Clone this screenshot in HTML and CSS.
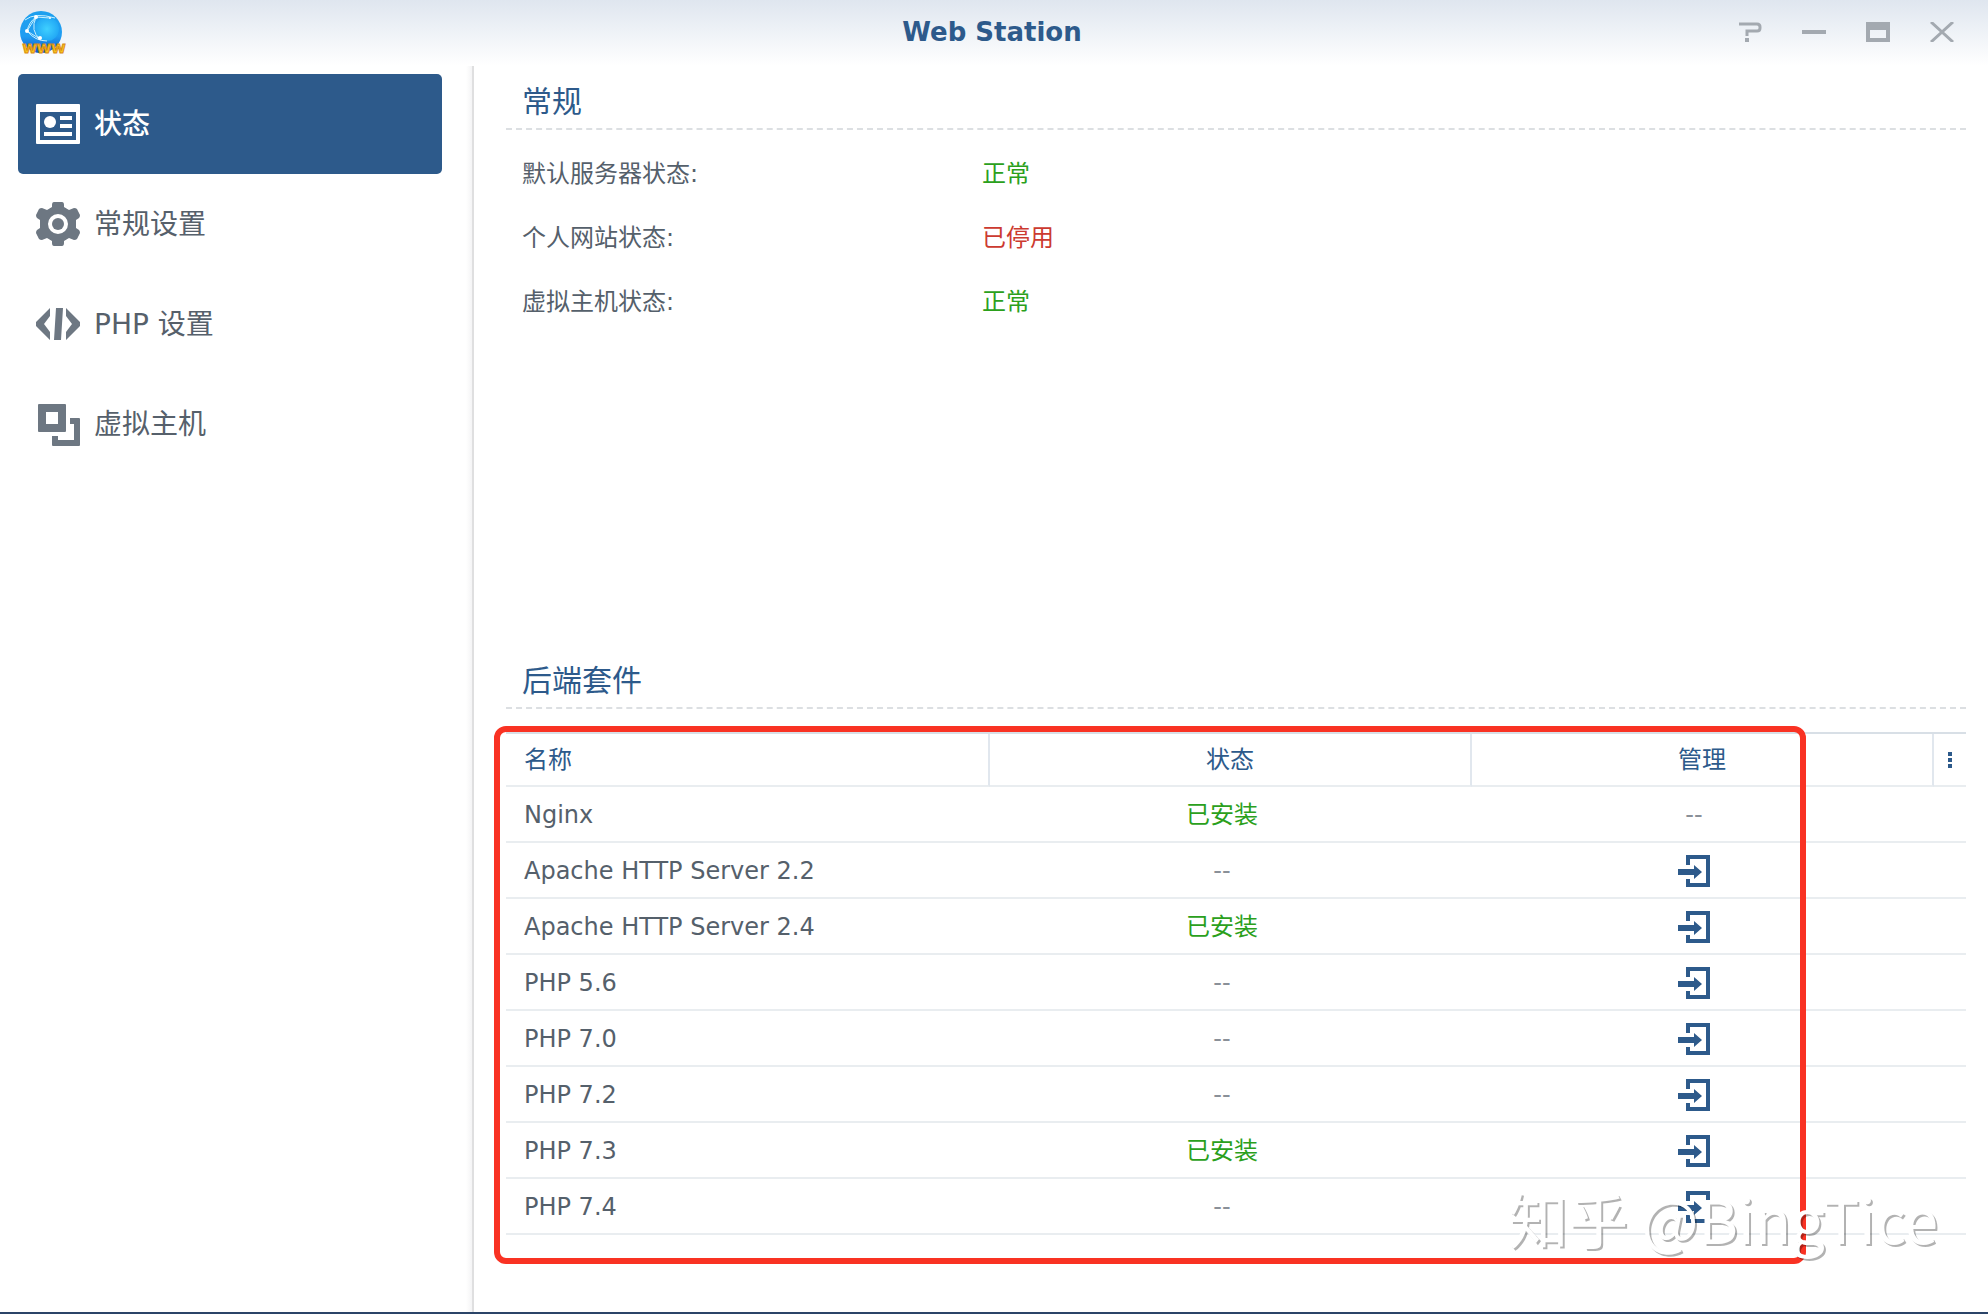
FILE: index.html
```html
<!DOCTYPE html>
<html lang="zh-CN">
<head>
    <meta charset="UTF-8">
    <meta name="viewport" content="width=device-width, initial-scale=1.0">
    <title>Web Station</title>
    <link rel="stylesheet" href="styles.css">
</head>
<body>
    <svg class="defs" aria-hidden="true">
        <symbol id="icon-open" viewBox="0 0 32 32">
            <path fill="currentColor" d="M8 0h24v32H8v-8h4v4h16V4H12v6H8z"/>
            <path fill="currentColor" d="M0 14h16v-4l8 7-8 7v-4H0z"/>
        </symbol>
    </svg>

    <div class="window">
        <header class="titlebar">
            <svg class="app-icon" viewBox="0 0 48 48" aria-hidden="true">
                <defs>
                    <linearGradient id="globe" x1="0" y1="0" x2="0" y2="1">
                        <stop offset="0" stop-color="#1ea0ee"/>
                        <stop offset="0.6" stop-color="#1f9df2"/>
                        <stop offset="1" stop-color="#1257c8"/>
                    </linearGradient>
                    <radialGradient id="glow">
                        <stop offset="0" stop-color="#3fd0ff"/>
                        <stop offset="1" stop-color="#22a8f5"/>
                    </radialGradient>
                </defs>
                <circle cx="23" cy="24" r="21" fill="url(#globe)"/>
                <circle cx="29" cy="21" r="12" fill="url(#glow)"/>
                <g fill="none" stroke="#c8f1ff" stroke-width="1">
                    <path d="M7 12q10-8 30-2M18 9Q11 14 9 23q8 10 20 10M18 9q-6 14 4 22M9 23l9-14 14 1M9 23l13 8"/>
                </g>
                <g fill="#fff">
                    <circle cx="18" cy="9" r="2"/>
                    <circle cx="9" cy="23" r="2"/>
                    <circle cx="22" cy="30" r="2"/>
                    <circle cx="32" cy="10" r="1"/>
                </g>
                <text class="app-icon-text" x="26" y="45" text-anchor="middle">WWW</text>
            </svg>
            <h1 class="title">Web Station</h1>
            <div class="controls">
                <button type="button" class="control" aria-label="帮助">
                    <svg viewBox="0 0 24 20"><path d="M1 2h18q3 0 3 3v1q0 3-3 3H9v5" fill="none" stroke="currentColor" stroke-width="3"/><path d="M7 16h4v4H7z" fill="currentColor"/></svg>
                </button>
                <button type="button" class="control" aria-label="最小化">
                    <svg viewBox="0 0 24 20"><path d="M0 8h24v4H0z" fill="currentColor"/></svg>
                </button>
                <button type="button" class="control" aria-label="最大化">
                    <svg viewBox="0 0 24 20"><path d="M0 0h24v20H0zM4 8v8h16V8z" fill="currentColor" fill-rule="evenodd"/></svg>
                </button>
                <button type="button" class="control" aria-label="关闭">
                    <svg viewBox="0 0 24 20"><path d="M1 0l22 20M23 0L1 20" fill="none" stroke="currentColor" stroke-width="3"/></svg>
                </button>
            </div>
        </header>

        <div class="body">
            <nav class="sidebar">
                <a href="#" class="nav-item active">
                    <svg class="nav-icon" viewBox="0 0 44 44" aria-hidden="true">
                        <path fill="currentColor" fill-rule="evenodd" d="M1 2h42q1 0 1 1v38q0 1-1 1H1q-1 0-1-1V3q0-1 1-1zM4 10v28h36V10z"/>
                        <circle cx="14" cy="20" r="6" fill="currentColor"/>
                        <path fill="currentColor" d="M24 14h12v4H24zM24 22h12v4H24zM8 30h28v4H8z"/>
                    </svg>
                    <span>状态</span>
                </a>
                <a href="#" class="nav-item">
                    <svg class="nav-icon" viewBox="0 0 44 44" aria-hidden="true">
                        <path fill="currentColor" fill-rule="evenodd" d="M18 0h8q2 0 2 3v2l5 3 5-2q2 0 3 1l3 6q0 2-1 3l-3 2v8l3 2q1 1 1 3l-3 6q-1 1-3 1l-5-2-5 3v2q0 3-2 3h-8q-2 0-2-3v-2l-5-3-5 2q-2 0-3-1l-3-6q0-2 1-3l3-2v-8l-3-2q-1-1-1-3l3-6q1-1 3-1l5 2 5-3V3q0-3 2-3zM22 12a10 10 0 1 0 0 20a10 10 0 1 0 0-20z"/>
                        <circle cx="22" cy="22" r="6" fill="currentColor"/>
                    </svg>
                    <span>常规设置</span>
                </a>
                <a href="#" class="nav-item">
                    <svg class="nav-icon" viewBox="0 0 44 44" aria-hidden="true">
                        <path fill="currentColor" d="M14 6v8L8 22l6 8v8L0 24v-4zM30 6l14 14v4L30 38v-8l6-8-6-8zM20 6h7l-2 32h-7z"/>
                    </svg>
                    <span>PHP 设置</span>
                </a>
                <a href="#" class="nav-item">
                    <svg class="nav-icon" viewBox="0 0 44 44" aria-hidden="true">
                        <path fill="currentColor" fill-rule="evenodd" d="M3 2h26q1 0 1 1v26q0 1-1 1H3q-1 0-1-1V3q0-1 1-1zM10 10v12h12V10z"/>
                        <path fill="currentColor" d="M34 16h9q1 0 1 1v26q0 1-1 1H17q-1 0-1-1v-9h6v4h16V22h-4z"/>
                    </svg>
                    <span>虚拟主机</span>
                </a>
            </nav>

            <main class="content">
                <section class="general">
                    <h2 class="section-title">常规</h2>
                    <dl class="status-list">
                        <dt>默认服务器状态:</dt>
                        <dd class="ok">正常</dd>
                        <dt>个人网站状态:</dt>
                        <dd class="off">已停用</dd>
                        <dt>虚拟主机状态:</dt>
                        <dd class="ok">正常</dd>
                    </dl>
                </section>

                <section class="packages">
                    <h2 class="section-title">后端套件</h2>
                    <div class="table-wrap">
                        <table class="table">
                            <colgroup>
                                <col class="col-name">
                                <col class="col-status">
                                <col class="col-manage">
                                <col class="col-menu">
                            </colgroup>
                            <thead>
                                <tr>
                                    <th>名称</th>
                                    <th>状态</th>
                                    <th>管理</th>
                                    <th>
                                        <button type="button" class="menu" aria-label="列选项">
                                            <svg viewBox="0 0 4 16"><path fill="currentColor" d="M0 0h4v4H0zM0 6h4v4H0zM0 12h4v4H0z"/></svg>
                                        </button>
                                    </th>
                                </tr>
                            </thead>
                            <tbody>
                                <tr>
                                    <td>Nginx</td>
                                    <td class="ok">已安装</td>
                                    <td>--</td>
                                    <td></td>
                                </tr>
                                <tr>
                                    <td>Apache HTTP Server 2.2</td>
                                    <td>--</td>
                                    <td><button type="button" class="open" aria-label="打开"><svg><use href="#icon-open"/></svg></button></td>
                                    <td></td>
                                </tr>
                                <tr>
                                    <td>Apache HTTP Server 2.4</td>
                                    <td class="ok">已安装</td>
                                    <td><button type="button" class="open" aria-label="打开"><svg><use href="#icon-open"/></svg></button></td>
                                    <td></td>
                                </tr>
                                <tr>
                                    <td>PHP 5.6</td>
                                    <td>--</td>
                                    <td><button type="button" class="open" aria-label="打开"><svg><use href="#icon-open"/></svg></button></td>
                                    <td></td>
                                </tr>
                                <tr>
                                    <td>PHP 7.0</td>
                                    <td>--</td>
                                    <td><button type="button" class="open" aria-label="打开"><svg><use href="#icon-open"/></svg></button></td>
                                    <td></td>
                                </tr>
                                <tr>
                                    <td>PHP 7.2</td>
                                    <td>--</td>
                                    <td><button type="button" class="open" aria-label="打开"><svg><use href="#icon-open"/></svg></button></td>
                                    <td></td>
                                </tr>
                                <tr>
                                    <td>PHP 7.3</td>
                                    <td class="ok">已安装</td>
                                    <td><button type="button" class="open" aria-label="打开"><svg><use href="#icon-open"/></svg></button></td>
                                    <td></td>
                                </tr>
                                <tr>
                                    <td>PHP 7.4</td>
                                    <td>--</td>
                                    <td><button type="button" class="open" aria-label="打开"><svg><use href="#icon-open"/></svg></button></td>
                                    <td></td>
                                </tr>
                            </tbody>
                        </table>
                        <div class="highlight"></div>
                    </div>
                </section>
            </main>
        </div>
        <div class="watermark">知乎 @BingTice</div>
    </div>
</body>
</html>
```

FILE: styles.css
```css
* {
    box-sizing: border-box;
}
body {
    margin: 0;
    font-family: Verdana, "DejaVu Sans", "Noto Sans CJK SC", sans-serif;
    font-size: 24px;
    line-height: 32px;
    color: #55606b;
    background: #fff;
}
button {
    display: block;
    padding: 0;
    border: 0;
    background: none;
    cursor: pointer;
}
svg {
    display: block;
}
.defs {
    display: none;
}
.window {
    position: relative;
    min-height: 100vh;
    display: flex;
    flex-direction: column;
    border-bottom: 2px solid #2b4468;
}

/* 标题栏 */
.titlebar {
    display: grid;
    grid-template-columns: 1fr auto 1fr;
    align-items: center;
    height: 66px;
    padding: 0 22px 2px 18px;
    background: linear-gradient(#dfe6ef, #fff);
}
.app-icon {
    width: 48px;
    height: 48px;
}
.app-icon-text {
    font: bold 13px "DejaVu Sans", sans-serif;
    fill: #f9c61c;
    stroke: #d98a12;
    stroke-width: 1px;
}
.title {
    margin: 0;
    font-size: 26px;
    font-weight: bold;
    color: #2d5a8b;
}
.controls {
    display: flex;
    justify-content: flex-end;
    gap: 40px;
    padding-right: 12px;
}
.control {
    color: #a3a9b0;
}
.control svg {
    width: 24px;
    height: 20px;
}

.body {
    flex: 1;
    display: flex;
}

/* 侧边栏 */
.sidebar {
    width: 474px;
    padding: 8px 30px 0 18px;
    border-right: 2px solid #dfdfe0;
    background: linear-gradient(to left, #f4f4f5, #fff 6px);
}
.nav-item {
    display: flex;
    align-items: center;
    gap: 14px;
    height: 100px;
    padding-left: 18px;
    border-radius: 5px;
    font-size: 28px;
    color: #56606b;
    text-decoration: none;
}
.nav-icon {
    width: 44px;
    height: 44px;
    color: #6d7782;
}
.nav-item span {
    padding-top: 2px;
}
.active,
.active .nav-icon {
    color: #fff;
}
.active {
    background: #2d5a8b;
    font-weight: 500;
}

/* 内容区 */
.content {
    flex: 1;
    padding: 15px 22px 32px 32px;
}
.general {
    height: 579px;
}
.section-title {
    margin: 0;
    padding: 0 16px 5px;
    border-bottom: 2px dashed #dcdfe2;
    font-size: 30px;
    font-weight: normal;
    line-height: 42px;
    color: #2d5a8b;
}
.status-list {
    display: grid;
    grid-template-columns: 460px 1fr;
    margin: 0;
    padding: 12px 16px;
    line-height: 64px;
}
.status-list dd {
    margin: 0;
}
.ok {
    color: #2ba01c;
}
.off {
    color: #cc3a30;
}

/* 套件列表 */
.table-wrap {
    position: relative;
    margin-top: 23px;
}
.table {
    width: 100%;
    table-layout: fixed;
    border-collapse: separate;
    border-spacing: 0;
    border-top: 2px solid #d8dfe6;
}
.col-name {
    width: 484px;
}
.col-status {
    width: 482px;
}
.col-menu {
    width: 32px;
}
.table th,
.table td {
    height: 56px;
    padding: 0;
    border-bottom: 2px solid #e9edf0;
    text-align: center;
}
.table th {
    height: 53px;
    border-right: 2px solid #e1e7ee;
    font-weight: normal;
    color: #2d5a8b;
}
.table th:last-child {
    border-right: 0;
}
.table td {
    padding-top: 2px;
    padding-right: 18px;
}
.table th:first-child,
.table td:first-child {
    padding-left: 18px;
    text-align: left;
}
.table td:not(:first-child, .ok) {
    color: #8a9098;
}
.open,
.menu {
    margin: 0 auto;
}
.table .open {
    color: #2d5a8b;
}
.open svg {
    width: 32px;
    height: 32px;
}
.menu {
    color: #2d5a8b;
}
.menu svg {
    width: 4px;
    height: 16px;
}

/* 红色标注框 */
.highlight {
    position: absolute;
    top: -6px;
    bottom: -29px;
    left: -12px;
    right: 160px;
    border: 6px solid #f93223;
    border-radius: 12px;
    pointer-events: none;
}
.watermark {
    position: absolute;
    right: 50px;
    bottom: 58px;
    font-family: "Noto Sans CJK SC", sans-serif;
    font-size: 60px;
    line-height: 72px;
    color: #fff;
    text-shadow: 2px 2px 0 rgba(0, 0, 0, 0.3);
    pointer-events: none;
}
```
